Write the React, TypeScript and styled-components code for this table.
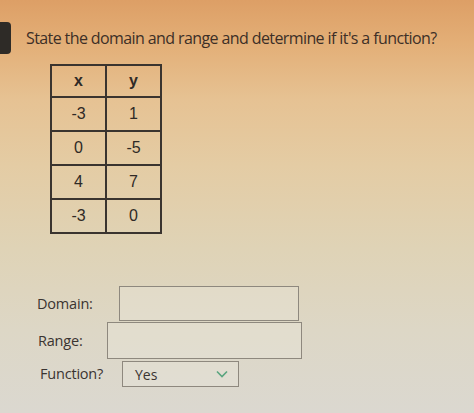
import React from "react";
import styled, { createGlobalStyle } from "styled-components";

const Global = createGlobalStyle`
  html, body { margin: 0; padding: 0; }
  body { font-family: "Open Sans", "Liberation Sans", sans-serif; }
`;

const Page = styled.div`
  width: 474px;
  height: 413px;
  overflow: hidden;
  box-sizing: border-box;
  padding-top: 22px;
  background: linear-gradient(
    180deg,
    #dd9f66 0%,
    #e3ae76 10%,
    #e6c293 24%,
    #e4cca4 40%,
    #dfd3b6 60%,
    #ddd7c6 80%,
    #dbd8d0 100%
  );
  color: #3b2e26;
`;

const TitleRow = styled.div`
  display: flex;
  align-items: center;
  height: 32px;
`;

const Tab = styled.div`
  width: 11px;
  height: 32px;
  flex: none;
  background: #2e2b27;
  border-radius: 0 4px 4px 0;
`;

const Title = styled.h1`
  margin: 0 0 0 15px;
  font-size: 16px;
  font-weight: 400;
  letter-spacing: -0.6px;
  white-space: nowrap;
  color: #3d2f27;
  line-height: 1;
`;

const Table = styled.table`
  margin: 10px 0 0 50px;
  border-collapse: collapse;
  font-family: "Liberation Sans", Arial, sans-serif;
  font-size: 16px;
  color: #2f2a26;
`;

const Cell = styled.td<{ $head?: boolean }>`
  width: 53px;
  height: ${(p) => (p.$head ? 30 : 32)}px;
  padding: 0;
  border: 2px solid #3a342f;
  text-align: center;
  font-weight: ${(p) => (p.$head ? 700 : 400)};
`;

const Form = styled.div`
  margin-top: 52px;
  display: flex;
  flex-direction: column;
  gap: 1px;
`;

const Row = styled.div<{ $h: number }>`
  display: flex;
  align-items: center;
  height: ${(p) => p.$h}px;
`;

const Label = styled.span<{ $x: number; $w: number }>`
  margin-left: ${(p) => p.$x}px;
  width: ${(p) => p.$w}px;
  font-size: 14.5px;
  letter-spacing: -0.2px;
  color: #3a3431;
`;

const Field = styled.div<{ $w: number }>`
  box-sizing: border-box;
  width: ${(p) => p.$w}px;
  height: 100%;
  border: 1.5px solid #8e887e;
  background: rgba(236, 232, 220, 0.35);
`;

const Select = styled.div`
  box-sizing: border-box;
  width: 117px;
  height: 26px;
  margin-top: 1px;
  border: 1.5px solid #8e887e;
  background: rgba(236, 232, 220, 0.35);
  display: flex;
  align-items: center;
  justify-content: space-between;
  padding: 0 10px 0 12px;
  font-size: 14px;
  color: #3a3431;
`;

const rows = [
  ["-3", "1"],
  ["0", "-5"],
  ["4", "7"],
  ["-3", "0"],
];

export default function App() {
  return (
    <Page>
      <Global />
      <TitleRow>
        <Tab />
        <Title>State the domain and range and determine if it's a function?</Title>
      </TitleRow>
      <Table>
        <tbody>
          <tr>
            <Cell $head>x</Cell>
            <Cell $head>y</Cell>
          </tr>
          {rows.map((r, i) => (
            <tr key={i}>
              <Cell>{r[0]}</Cell>
              <Cell>{r[1]}</Cell>
            </tr>
          ))}
        </tbody>
      </Table>
      <Form>
        <Row $h={35}>
          <Label $x={37} $w={82}>Domain:</Label>
          <Field $w={180} />
        </Row>
        <Row $h={37}>
          <Label $x={38} $w={69}>Range:</Label>
          <Field $w={195} />
        </Row>
        <Row $h={27}>
          <Label $x={40} $w={82}>Function?</Label>
          <Select>
            <span>Yes</span>
            <svg width="12" height="8" viewBox="0 0 12 8">
              <path d="M1 1.5 L6 6.5 L11 1.5" fill="none" stroke="#5aa57f" strokeWidth="1.6" />
            </svg>
          </Select>
        </Row>
      </Form>
    </Page>
  );
}
